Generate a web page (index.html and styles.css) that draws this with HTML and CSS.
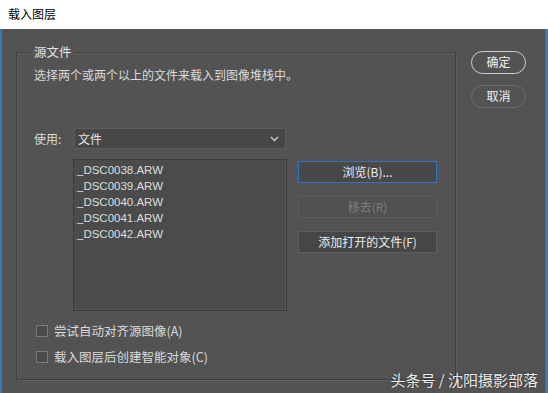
FILE: index.html
```html
<!DOCTYPE html>
<html lang="zh-CN">
<head>
	<meta charset="UTF-8">
	<title>载入图层</title>
	<link rel="stylesheet" href="styles.css">
</head>
<body>
<div class="window">
	<div class="titlebar">载入图层</div>
	<div class="content">
		<fieldset class="group">
			<legend>源文件</legend>
			<p class="desc">选择两个或两个以上的文件来载入到图像堆栈中。</p>
			<div class="use-row">
				<span class="label">使用:</span>
				<div class="select">
					<span>文件</span>
					<svg class="chev" width="9" height="6" viewBox="0 0 9 6"><path d="M1 1 L4.5 4.5 L8 1" fill="none" stroke="#d0d0d0" stroke-width="1.3"/></svg>
				</div>
			</div>
			<div class="files-row">
				<ul class="files">
					<li>_DSC0038.ARW</li>
					<li>_DSC0039.ARW</li>
					<li>_DSC0040.ARW</li>
					<li>_DSC0041.ARW</li>
					<li>_DSC0042.ARW</li>
				</ul>
				<div class="actions">
					<div class="btn focus">浏览(B)...</div>
					<div class="btn disabled">移去(R)</div>
					<div class="btn">添加打开的文件(F)</div>
				</div>
			</div>
			<div class="check"><span class="box"></span>尝试自动对齐源图像(A)</div>
			<div class="check"><span class="box"></span>载入图层后创建智能对象(C)</div>
		</fieldset>
		<div class="side">
			<div class="pill ok">确定</div>
			<div class="pill">取消</div>
		</div>
	</div>
	<div class="mark">头条号 / 沈阳摄影部落</div>
</div>
</body>
</html>
```

FILE: styles.css
```css
body{
	margin: 0;
	font-family: "Noto Sans CJK SC", "Liberation Sans", sans-serif;
}
.window{
	position: relative;
	width: 548px;
	height: 393px;
	background: #535353;
	overflow: hidden;
}
.titlebar{
	height: 29px;
	line-height: 28px;
	background: #fff;
	color: #000;
	font-size: 12px;
	padding-left: 8px;
}
.content{
	display: flex;
	height: 364px;
	border-left: 2px solid #3a77b4;
	border-right: 3px solid #3a77b4;
	color: #dadada;
	font-size: 12px;
}
.group{
	margin: 15px 0 0 14px;
	padding: 0 15px 12px 15px;
	width: 440px;
	box-sizing: border-box;
	height: 336px;
	border: 1px solid #3f3f3f;
	box-shadow: inset 1px 1px 0 #5e5e5e, 1px 1px 0 #5e5e5e;
}
.group legend{
	padding: 0 2px;
	line-height: 16px;
	font-size: 12.5px;
	color: #e2e2e2;
}
.desc{
	margin: 7px 0 0 2px;
	line-height: 16px;
}
.use-row{
	display: flex;
	align-items: center;
	margin-top: 45px;
	margin-left: 2px;
}
.label{
	width: 40px;
}
.select{
	display: flex;
	align-items: center;
	justify-content: space-between;
	width: 212px;
	height: 21px;
	box-sizing: border-box;
	padding: 0 6px 0 3px;
	background: #474747;
	border: 1px solid #5c5c5c;
	color: #e6e6e6;
}
.files-row{
	display: flex;
	margin-top: 10px;
}
.files{
	margin: 0 0 0 41px;
	padding: 2px 3px;
	list-style: none;
	width: 214px;
	height: 152px;
	box-sizing: border-box;
	background: #4b4b4b;
	border: 1px solid #3c3c3c;
	box-shadow: inset -1px -1px 0 #575757;
	font-family: "Liberation Sans", sans-serif;
	font-size: 11.5px;
}
.files li{
	line-height: 16px;
	color: #dedede;
}
.actions{
	display: flex;
	flex-direction: column;
	gap: 13px;
	margin: 2px 0 0 11px;
}
.btn{
	width: 139px;
	height: 22px;
	box-sizing: border-box;
	line-height: 20px;
	text-align: center;
	background: #464646;
	border: 1px solid #5e5e5e;
	color: #ececec;
}
.btn.focus{
	border-color: #2f74c4;
	background: #484848;
}
.btn.disabled{
	background: #515151;
	border-color: #5c5c5c;
	color: #7d7d7d;
}
.check{
	display: flex;
	align-items: center;
	line-height: 16px;
	margin-left: 4px;
	margin-top: 10px;
	font-size: 12.5px;
}
.check + .check{
	margin-top: 10px;
}
.files-row + .check{
	margin-top: 12px;
}
.box{
	width: 12px;
	height: 12px;
	box-sizing: border-box;
	border: 1px solid #7a7a7a;
	background: #4a4a4a;
	margin-right: 6px;
}
.side{
	display: flex;
	flex-direction: column;
	gap: 11px;
	margin: 22px 0 0 15px;
}
.pill{
	width: 55px;
	height: 23px;
	box-sizing: border-box;
	line-height: 20px;
	text-align: center;
	border: 1.5px solid #6e6e6e;
	border-radius: 12px;
	color: #f0f0f0;
}
.pill.ok{
	border-color: #cfcfcf;
}
.mark{
	position: absolute;
	right: 10px;
	bottom: 3px;
	font-size: 15px;
	color: #ececec;
	text-shadow: 0 0 2px rgba(0,0,0,0.5);
}
```
